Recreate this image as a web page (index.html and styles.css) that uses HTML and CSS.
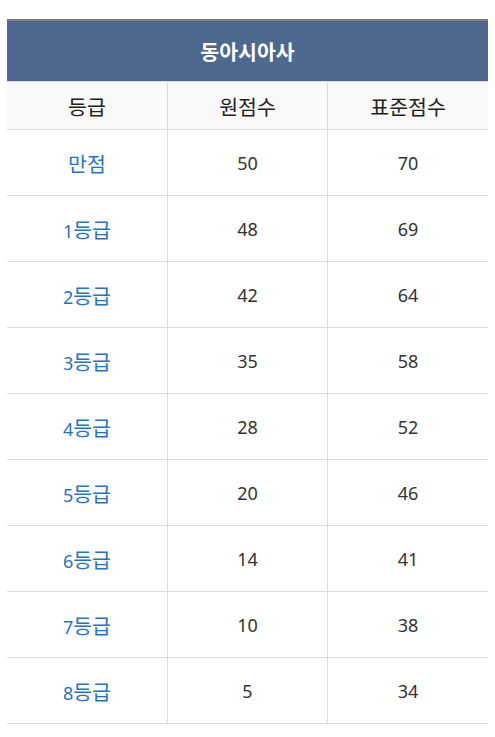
FILE: index.html
```html
<!DOCTYPE html>
<html lang="ko">
<head>
<meta charset="utf-8">
<link rel="stylesheet" href="styles.css">
</head>
<body>
<div class="wrap">
<table class="score">
  <thead>
    <tr><th class="title" colspan="3"><span class="ko">동아시아사</span></th></tr>
    <tr class="head"><th><span class="ko">등급</span></th><th><span class="ko">원점수</span></th><th><span class="ko">표준점수</span></th></tr>
  </thead>
  <tbody>
    <tr><td class="grade"><span class="ko">만점</span></td><td>50</td><td>70</td></tr>
    <tr><td class="grade">1<span class="ko">등급</span></td><td>48</td><td>69</td></tr>
    <tr><td class="grade">2<span class="ko">등급</span></td><td>42</td><td>64</td></tr>
    <tr><td class="grade">3<span class="ko">등급</span></td><td>35</td><td>58</td></tr>
    <tr><td class="grade">4<span class="ko">등급</span></td><td>28</td><td>52</td></tr>
    <tr><td class="grade">5<span class="ko">등급</span></td><td>20</td><td>46</td></tr>
    <tr><td class="grade">6<span class="ko">등급</span></td><td>14</td><td>41</td></tr>
    <tr><td class="grade">7<span class="ko">등급</span></td><td>10</td><td>38</td></tr>
    <tr><td class="grade">8<span class="ko">등급</span></td><td>5</td><td>34</td></tr>
  </tbody>
</table>
</div>
</body>
</html>
```

FILE: styles.css
```css
html, body {
  margin: 0;
  padding: 0;
  background: #ffffff;
}
.wrap {
  padding: 19px 7px 0 7px;
}
.score {
  width: 481px;
  border-collapse: collapse;
  table-layout: fixed;
  font-family: "Noto Sans", "Noto Sans CJK KR", sans-serif;
  font-size: 18px;
  color: #333333;
}
.score th, .score td {
  text-align: center;
  vertical-align: middle;
  padding: 0;
  border-bottom: 1px solid #dcdcdc;
  border-left: 1px solid #dcdcdc;
}
.score th:first-child, .score td:first-child {
  border-left: none;
}
.ko {
  font-family: "Noto Sans CJK KR", sans-serif;
  font-size: 20.5px;
}
.score .title {
  height: 60px;
  background: #4d6990;
  color: #ffffff;
  font-weight: bold;
  border-top: 2px solid #7a7a7a;
  border-bottom: 1px solid #dcdcdc;
  border-left: none;
}
.score .head th {
  height: 47px;
  background: #f9f9f9;
  font-weight: normal;
  color: #222222;
}
.score td {
  height: 65px;
}
.score .grade {
  color: #1f74c9;
}
```
